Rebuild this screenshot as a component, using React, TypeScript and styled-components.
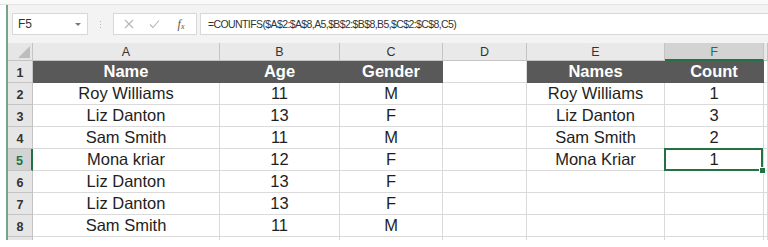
import React from 'react';
import styled, { createGlobalStyle } from 'styled-components';

const Global = createGlobalStyle`
  html, body { margin: 0; padding: 0; background: #ffffff; }
  body { font-family: "Liberation Sans", Arial, sans-serif; }
`;

const GREEN = '#217346';
const GRID = '#dadada';
const HEAD_LINE = '#c4c4c4';
const DARK = '#595959';

const Window = styled.div`
  width: 768px;
  height: 247px;
  overflow: hidden;
  background: #ffffff;
  display: flex;
  flex-direction: column;
`;

const TopStrip = styled.div`
  height: 4px;
  flex: none;
  background: #fafafa;
  border-bottom: 1px solid #e2e2e2;
`;

const Body = styled.div`
  display: flex;
  flex: none;
`;

const LeftEdge = styled.div`
  width: 6px;
  flex: none;
  background: #ffffff;
  border-right: 2px solid #74a686;
`;

const Main = styled.div`
  flex: 1;
  min-width: 0;
  display: flex;
  flex-direction: column;
`;

const FormulaBar = styled.div`
  height: 38px;
  flex: none;
  box-sizing: border-box;
  background: #f3f3f3;
  display: flex;
  align-items: flex-start;
  padding: 8px 0 0 4px;
`;

const Box = styled.div`
  height: 22px;
  box-sizing: border-box;
  background: #ffffff;
  border: 1px solid #d8d8d8;
  display: flex;
  align-items: center;
`;

const NameBox = styled(Box)`
  width: 76px;
  flex: none;
  padding: 0 0 0 5px;
  justify-content: space-between;
  font-size: 12px;
  color: #333;
`;

const Caret = styled.span`
  width: 0;
  height: 0;
  border-left: 3px solid transparent;
  border-right: 3px solid transparent;
  border-top: 3px solid #777;
  margin-right: 6px;
`;

const Dots = styled.div`
  width: 25px;
  height: 22px;
  flex: none;
  display: flex;
  flex-direction: column;
  align-items: center;
  justify-content: center;
  gap: 2px;
  span {
    width: 1px;
    height: 1px;
    background: #b8b8b8;
  }
`;

const FxBox = styled(Box)`
  width: 84px;
  flex: none;
  display: grid;
  grid-template-columns: 30px 20px 34px;
  align-items: center;
  justify-items: center;
`;

const Fx = styled.span`
  font-family: "Liberation Serif", "Times New Roman", serif;
  font-style: italic;
  font-size: 12px;
  color: #555;
  sub {
    font-size: 8px;
    vertical-align: -1px;
  }
`;

const FormulaBox = styled(Box)`
  flex: 1;
  margin-left: 3px;
  padding-left: 7px;
  font-size: 10.5px;
  letter-spacing: -0.6px;
  color: #333;
  border-right: none;
  white-space: nowrap;
`;

const Sheet = styled.div`
  display: grid;
  grid-template-columns: 25px 187px 120px 103px 84px 138px 99px 1fr;
  grid-template-rows: 18px repeat(8, 22px) 3px;
`;

const Corner = styled.div`
  background: #e6e6e6;
  border-right: 1px solid ${HEAD_LINE};
  border-bottom: 1px solid ${HEAD_LINE};
  box-sizing: border-box;
  position: relative;
  &::after {
    content: '';
    position: absolute;
    right: 2px;
    bottom: 2px;
    width: 0;
    height: 0;
    border-left: 12px solid transparent;
    border-bottom: 12px solid #bdbdbd;
  }
`;

const ColHead = styled.div<{ $sel?: boolean }>`
  box-sizing: border-box;
  background: ${(p) => (p.$sel ? '#d3d3d3' : '#e9e9e9')};
  border-right: 1px solid ${HEAD_LINE};
  border-bottom: ${(p) => (p.$sel ? `2px solid ${GREEN}` : `1px solid ${HEAD_LINE}`)};
  color: ${(p) => (p.$sel ? GREEN : '#333')};
  font-size: 12.5px;
  display: flex;
  align-items: center;
  justify-content: center;
  padding-top: 1px;
`;

const RowHead = styled.div<{ $sel?: boolean; $stub?: boolean }>`
  box-sizing: border-box;
  background: ${(p) => (p.$sel ? '#d3d3d3' : '#e6e6e6')};
  border-right: ${(p) => (p.$sel ? `2px solid ${GREEN}` : `1px solid ${HEAD_LINE}`)};
  border-bottom: ${(p) => (p.$stub ? 'none' : `1px solid ${HEAD_LINE}`)};
  color: ${(p) => (p.$sel ? GREEN : '#333')};
  font-size: 12.5px;
  font-weight: bold;
  display: flex;
  align-items: center;
  justify-content: center;
  padding-top: 2px;
  overflow: hidden;
`;

const Cell = styled.div<{ $dark?: boolean; $sel?: boolean; $stub?: boolean }>`
  box-sizing: border-box;
  position: relative;
  background: ${(p) => (p.$dark ? DARK : '#ffffff')};
  color: ${(p) => (p.$dark ? '#ffffff' : '#1e1e1e')};
  font-weight: ${(p) => (p.$dark ? 'bold' : 'normal')};
  border-right: 1px solid ${(p) => (p.$dark ? DARK : GRID)};
  border-bottom: ${(p) => (p.$stub ? 'none' : `1px solid ${p.$dark ? DARK : GRID}`)};
  font-size: 16.5px;
  display: flex;
  align-items: center;
  justify-content: center;
  white-space: nowrap;
  ${(p) =>
    p.$sel
      ? `
    &::after {
      content: '';
      position: absolute;
      top: -1px;
      left: -1px;
      right: 0;
      bottom: -1px;
      border: 2px solid ${GREEN};
      pointer-events: none;
    }
    &::before {
      content: '';
      position: absolute;
      right: -3px;
      bottom: -4px;
      width: 5px;
      height: 5px;
      background: ${GREEN};
      border: 1px solid #fff;
      z-index: 1;
    }
  `
      : ''}
`;

const columns = ['A', 'B', 'C', 'D', 'E', 'F'];

type Row = [string, string, string, string, string, string];

const rows: Row[] = [
  ['Name', 'Age', 'Gender', '', 'Names', 'Count'],
  ['Roy Williams', '11', 'M', '', 'Roy Williams', '1'],
  ['Liz Danton', '13', 'F', '', 'Liz Danton', '3'],
  ['Sam Smith', '11', 'M', '', 'Sam Smith', '2'],
  ['Mona kriar', '12', 'F', '', 'Mona Kriar', '1'],
  ['Liz Danton', '13', 'F', '', '', ''],
  ['Liz Danton', '13', 'F', '', '', ''],
  ['Sam Smith', '11', 'M', '', '', ''],
];

const CrossIcon = () => (
  <svg width="10" height="10" viewBox="0 0 10 10">
    <path d="M1 1 L9 9 M9 1 L1 9" stroke="#b5b5b5" strokeWidth="1.1" fill="none" />
  </svg>
);

const CheckIcon = () => (
  <svg width="11" height="10" viewBox="0 0 11 10">
    <path d="M1 5.5 L4 8.5 L10 1.5" stroke="#b5b5b5" strokeWidth="1.1" fill="none" />
  </svg>
);

export default function App() {
  return (
    <>
      <Global />
      <Window>
        <TopStrip />
        <Body>
          <LeftEdge />
          <Main>
            <FormulaBar>
              <NameBox>
                F5
                <Caret />
              </NameBox>
              <Dots>
                <span />
                <span />
                <span />
              </Dots>
              <FxBox>
                <CrossIcon />
                <CheckIcon />
                <Fx>
                  f<sub>x</sub>
                </Fx>
              </FxBox>
              <FormulaBox>=COUNTIFS($A$2:$A$8,A5,$B$2:$B$8,B5,$C$2:$C$8,C5)</FormulaBox>
            </FormulaBar>
            <Sheet>
              <Corner />
              {columns.map((c) => (
                <ColHead key={c} $sel={c === 'F'}>
                  {c}
                </ColHead>
              ))}
              <ColHead />
              {rows.map((r, ri) => (
                <React.Fragment key={ri}>
                  <RowHead $sel={ri === 4}>{ri + 1}</RowHead>
                  {r.map((v, ci) => (
                    <Cell key={ci} $dark={ri === 0 && ci !== 3} $sel={ri === 4 && ci === 5}>
                      {v}
                    </Cell>
                  ))}
                  <Cell />
                </React.Fragment>
              ))}
              <RowHead $stub />
              {columns.map((c) => (
                <Cell key={c} $stub />
              ))}
              <Cell $stub />
            </Sheet>
          </Main>
        </Body>
      </Window>
    </>
  );
}
